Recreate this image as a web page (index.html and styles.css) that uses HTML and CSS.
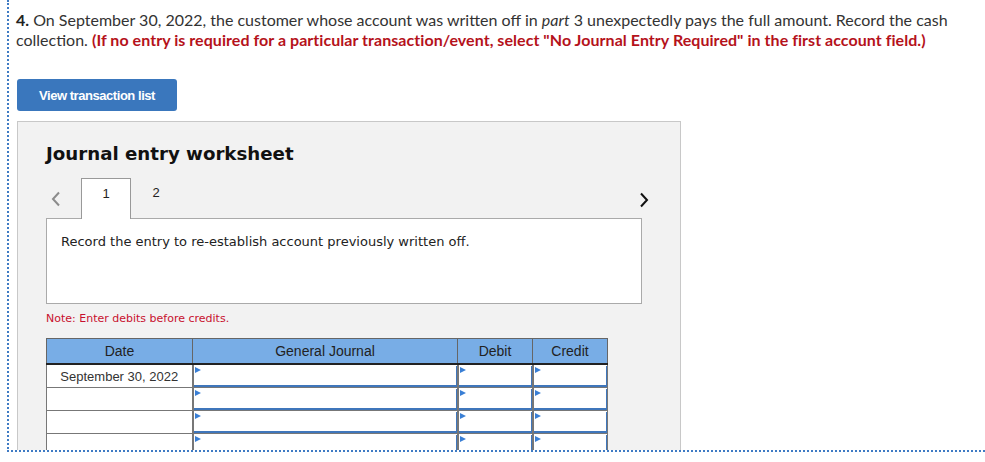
FILE: index.html
```html
<!DOCTYPE html>
<html>
<head>
<meta charset="utf-8">
<link rel="stylesheet" href="styles.css">
</head>
<body>
<div class="frame">
  <p class="question"><b>4.</b> On September 30, 2022, the customer whose account was written off in <i>part</i> 3 unexpectedly pays the full amount. Record the cash collection. <span class="warn">(If no entry is required for a particular transaction/event, select "No Journal Entry Required" in the first account field.)</span></p>
  <button class="btn">View transaction list</button>
  <div class="panel">
    <h2 class="title">Journal entry worksheet</h2>
    <div class="nav">
      <svg class="chev" width="12" height="16" viewBox="0 0 12 16"><path d="M9 1.5 L3 8 L9 14.5" fill="none" stroke="#8c8c8c" stroke-width="2"/></svg>
      <div class="tab active">1</div>
      <div class="tab">2</div>
      <div class="spacer"></div>
      <svg class="chev right" width="12" height="16" viewBox="0 0 12 16"><path d="M3 1.5 L9 8 L3 14.5" fill="none" stroke="#111" stroke-width="2"/></svg>
    </div>
    <div class="desc">Record the entry to re-establish account previously written off.</div>
    <p class="note">Note: Enter debits before credits.</p>
    <table class="journal">
      <thead>
        <tr><th class="c-date">Date</th><th class="c-acct">General Journal</th><th class="c-num">Debit</th><th class="c-num">Credit</th></tr>
      </thead>
      <tbody>
        <tr><td class="date">September 30, 2022</td><td class="in"><div class="field"></div></td><td class="in"><div class="field"></div></td><td class="in"><div class="field"></div></td></tr>
        <tr><td class="date"></td><td class="in"><div class="field"></div></td><td class="in"><div class="field"></div></td><td class="in"><div class="field"></div></td></tr>
        <tr><td class="date"></td><td class="in"><div class="field"></div></td><td class="in"><div class="field"></div></td><td class="in"><div class="field"></div></td></tr>
        <tr><td class="date"></td><td class="in"><div class="field"></div></td><td class="in"><div class="field"></div></td><td class="in"><div class="field"></div></td></tr>
        <tr><td class="date"></td><td class="in"><div class="field"></div></td><td class="in"><div class="field"></div></td><td class="in"><div class="field"></div></td></tr>
      </tbody>
    </table>
  </div>
</div>
</body>
</html>
```
FILE: styles.css
```css
html, body { margin: 0; padding: 0; background: #fff; }
body { padding-left: 7px; }
.frame {
  height: 450px;
  overflow: hidden;
  border-left: 2px dotted #3f7bc4;
  border-bottom: 2px dotted #3f7bc4;
  padding-left: 8px;
  box-sizing: content-box;
}
.question {
  margin: 10px 20px 0 -1px;
  font-family: Lato, "Open Sans", sans-serif;
  font-size: 16px;
  line-height: 20px;
  color: #333;
}
.question b { color: #222; }
.warn { color: #b5121b; font-weight: bold; letter-spacing: 0.05px; }
.btn {
  display: block;
  margin-top: 29px;
  width: 160px;
  height: 32px;
  border: none;
  border-radius: 3px;
  background: #3a77bd;
  color: #fff;
  font-family: "Liberation Sans", Arial, sans-serif;
  font-weight: bold;
  font-size: 13px;
  letter-spacing: -0.45px;
  padding: 0;
}
.panel {
  margin-top: 10px;
  width: 664px;
  height: 400px;
  border: 1px solid #c8c8c8;
  background: #f2f2f2;
  padding-left: 28px;
  box-sizing: border-box;
}
.title {
  margin: 20px 0 0 0;
  font-family: "DejaVu Sans", Verdana, sans-serif;
  font-weight: bold;
  font-size: 18.2px;
  line-height: 24px;
  color: #111;
}
.nav {
  display: flex;
  align-items: flex-end;
  margin-top: 12px;
  height: 41px;
  width: 604px;
}
.chev { align-self: center; margin-left: 4px; margin-right: 19px; }
.chev.right { margin-right: 0; margin-top: 2px; }
.spacer { flex: 1; }
.tab {
  width: 50px;
  height: 41px;
  box-sizing: border-box;
  font-family: "Liberation Sans", Arial, sans-serif;
  font-size: 13px;
  color: #222;
  text-align: center;
  line-height: 30px;
  position: relative;
  z-index: 1;
}
.tab.active {
  background: #fff;
  border: 1px solid #999;
  border-bottom: none;
}
.desc {
  margin-top: -1px;
  width: 596px;
  height: 86px;
  box-sizing: border-box;
  background: #fff;
  border: 1px solid #aaa;
  padding: 15px 14px;
  font-family: "DejaVu Sans", Verdana, sans-serif;
  font-size: 13px;
  color: #222;
}
.note {
  margin: 8px 0 0 0;
  font-family: "DejaVu Sans", Verdana, sans-serif;
  font-size: 11px;
  line-height: 14px;
  color: #c8102e;
}
.journal {
  margin-top: 12px;
  border-collapse: collapse;
  table-layout: fixed;
  width: 561px;
  font-family: "Liberation Sans", Arial, sans-serif;
  font-size: 13px;
}
.journal th {
  background: #78ade6;
  color: #222;
  font-weight: normal;
  font-size: 14px;
  height: 24px;
  border: 1px solid #666;
  border-bottom: 2px solid #222;
  padding: 0;
}
.c-date { width: 145px; }
.c-acct { width: 264px; }
.c-num { width: 74px; }
.journal td {
  height: 22px;
  border: 1px solid #777;
  padding: 0;
  background: #fff;
}
.journal td.date { text-align: center; color: #333; }
.journal td.in { border-left: 2px solid #777; }
.field {
  height: 19px;
  border-bottom: 2px solid #3f76bb;
  border-right: 1px solid #3f76bb;
  position: relative;
  background: #fff;
}
.field::before {
  content: "";
  position: absolute;
  left: 1px;
  top: 1px;
  border-left: 6px solid #3a7fd5;
  border-top: 3px solid transparent;
  border-bottom: 3px solid transparent;
}
```
